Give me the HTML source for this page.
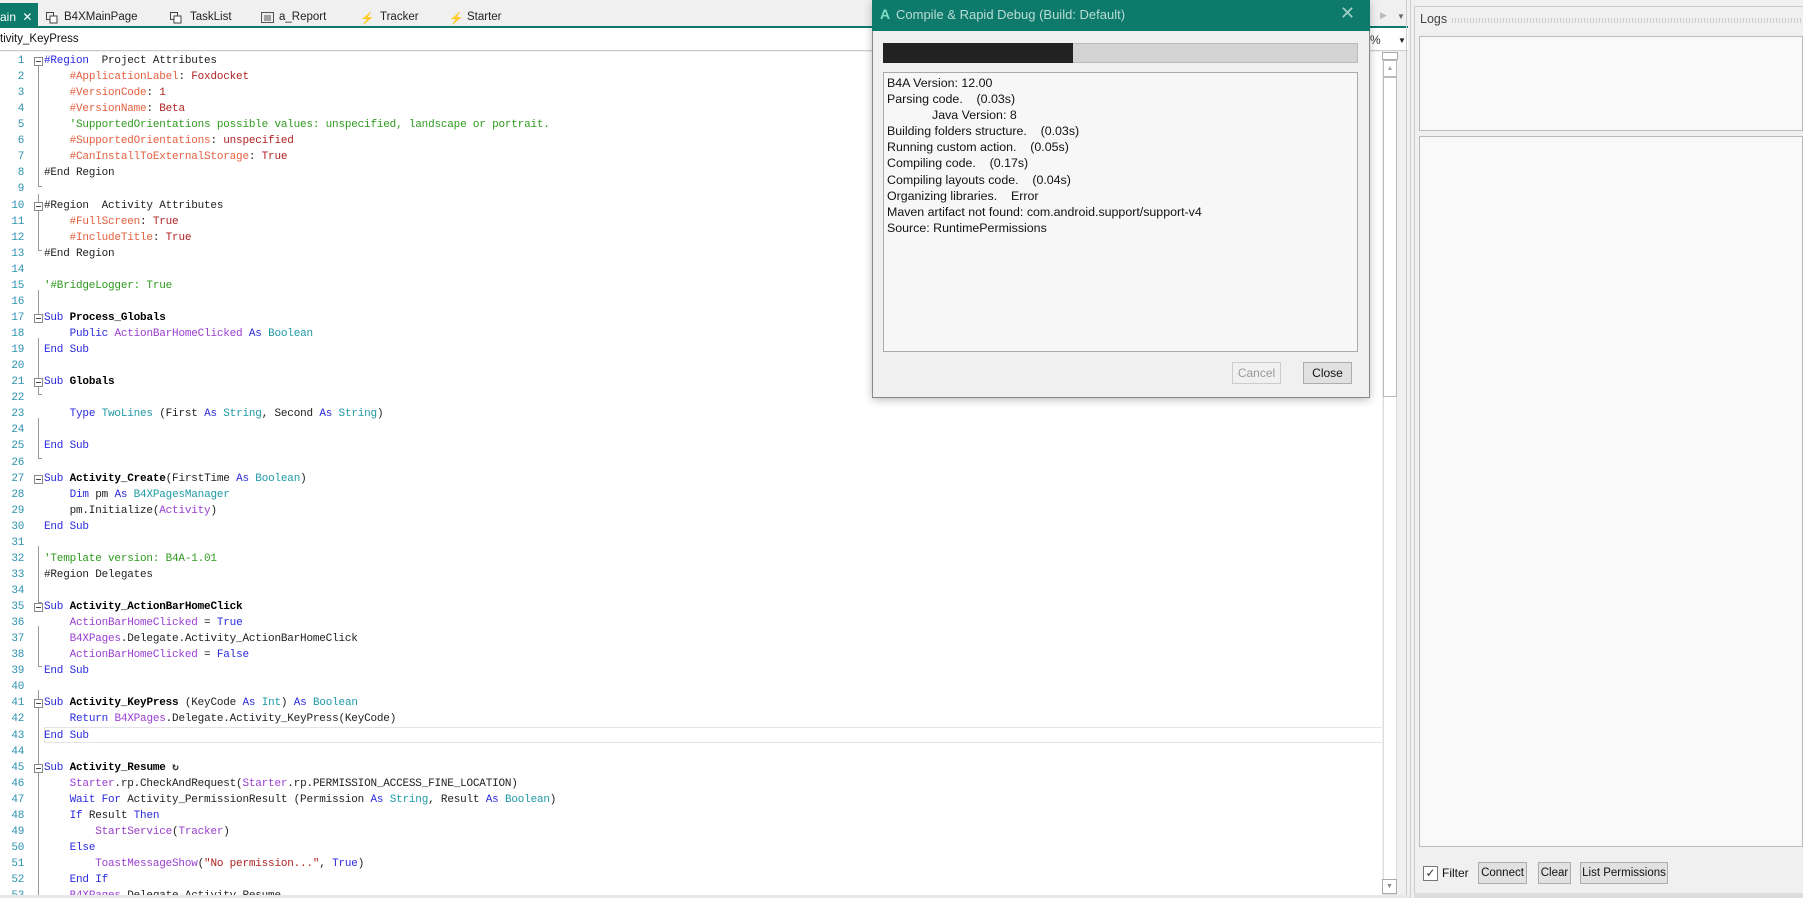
<!DOCTYPE html>
<html><head><meta charset="utf-8"><style>
*{margin:0;padding:0;box-sizing:border-box}
body{width:1803px;height:898px;overflow:hidden;background:#f0f0f0;position:relative;font-family:"Liberation Sans",sans-serif}
.a{position:absolute}
#code{position:absolute;left:0;top:52px;width:1382px;height:843px;background:#fff;overflow:hidden}
.ln{position:absolute;left:0;width:24px;text-align:right;color:#2b91af;font:11px/16px "Liberation Mono",monospace;letter-spacing:-0.3px}
.tx{position:absolute;left:44px;white-space:pre;font:11px/16px "Liberation Mono",monospace;letter-spacing:-0.2px;color:#222}
.k{color:#2a2ae0}.d{color:#e4603f}.v{color:#b02222}.c{color:#2e9a1e}.t{color:#1e9aa6}.p{color:#9a3ed2}.b{font-weight:bold;color:#000}
.fold{position:absolute;left:34px;width:9px;height:9px;border:1px solid #888;background:#fff}
.fold:after{content:"";position:absolute;left:1px;top:3px;width:5px;height:1px;background:#444}
.vl{position:absolute;left:38px;width:1px;background:#999}
.tab{position:absolute;top:11px;font-size:11.5px;color:#222}
.btn{position:absolute;border:1px solid #adadad;background:#e1e1e1;font-size:11.5px;text-align:center;color:#111;white-space:nowrap}
.dl{font-size:12.4px;color:#111;line-height:16.1px}
</style></head><body>
<!-- tab bar -->
<div class="a" style="left:0;top:3px;width:38px;height:23px;background:#0e7a6c;color:#fff;font-size:12px;padding:7px 0 0 0">ain <span style="margin-left:3px">✕</span></div>
<div class="a" style="left:0;top:26px;width:1408px;height:2px;background:#0e7a6c"></div>
<svg class="a" style="left:46px;top:12px" width="12" height="12"><rect x="0.5" y="0.5" width="7" height="7" fill="none" stroke="#444"/><rect x="4" y="4" width="7" height="7" fill="#fff" stroke="#444"/></svg>
<div class="tab" style="left:64px">B4XMainPage</div>
<svg class="a" style="left:170px;top:12px" width="12" height="12"><rect x="0.5" y="0.5" width="7" height="7" fill="none" stroke="#444"/><rect x="4" y="4" width="7" height="7" fill="#fff" stroke="#444"/></svg>
<div class="tab" style="left:190px">TaskList</div>
<svg class="a" style="left:261px;top:12px" width="13" height="12"><rect x="0.5" y="0.5" width="12" height="10" fill="#eee" stroke="#555"/><path d="M3 4h7M3 6h7M3 8h7" stroke="#555"/></svg>
<div class="tab" style="left:279px">a_Report</div>
<div class="tab" style="left:360px;color:#e0902a">⚡</div>
<div class="tab" style="left:380px">Tracker</div>
<div class="tab" style="left:449px;color:#e0902a">⚡</div>
<div class="tab" style="left:467px">Starter</div>
<div class="a" style="left:1380px;top:10px;color:#bbb;font-size:9px">▶</div>
<div class="a" style="left:1397px;top:12px;color:#666;font-size:8px">▼</div>
<!-- second bar -->
<div class="a" style="left:0;top:28px;width:1408px;height:23px;background:#fff;border-bottom:1px solid #ccc"></div>
<div class="a" style="left:0;top:33px;font-size:11.5px;color:#111">tivity_KeyPress</div>
<div class="a" style="left:1370px;top:33px;font-size:12px;color:#333">%</div>
<div class="a" style="left:1398px;top:36px;font-size:8px;color:#222">▼</div>
<!-- code -->
<div id="code">
<div class="a" style="left:44px;top:675px;width:1338px;height:16px;border:1px solid #e4e4e4;border-right:none"></div>
<div class="vl" style="top:14px;height:120px"></div><div class="a" style="left:38px;top:134px;width:4px;height:1px;background:#999"></div>
<div class="vl" style="top:142px;height:56px"></div><div class="a" style="left:38px;top:198px;width:4px;height:1px;background:#999"></div>
<div class="vl" style="top:238px;height:24px"></div><div class="a" style="left:38px;top:262px;width:4px;height:1px;background:#999"></div>
<div class="vl" style="top:286px;height:56px"></div><div class="a" style="left:38px;top:342px;width:4px;height:1px;background:#999"></div>
<div class="vl" style="top:366px;height:40px"></div><div class="a" style="left:38px;top:406px;width:4px;height:1px;background:#999"></div>
<div class="vl" style="top:494px;height:56px"></div><div class="a" style="left:38px;top:550px;width:4px;height:1px;background:#999"></div>
<div class="vl" style="top:574px;height:40px"></div><div class="a" style="left:38px;top:614px;width:4px;height:1px;background:#999"></div>
<div class="vl" style="top:638px;height:210px"></div>
<div id="lines"></div>
</div>
<!-- scrollbar -->
<div class="a" style="left:1383px;top:52px;width:14px;height:843px;background:#fff;border:1px solid #ddd"></div>
<div class="a" style="left:1382px;top:52px;width:16px;height:8px;border:1px solid #aaa;background:#fff"></div>
<div class="a" style="left:1383px;top:60px;width:14px;height:17px;border:1px solid #bbb;background:#fff;font-size:7px;color:#aaa;text-align:center;line-height:15px">▲</div>
<div class="a" style="left:1383px;top:77px;width:14px;height:320px;border:1px solid #bbb;background:#fff"></div>
<div class="a" style="left:1382px;top:879px;width:15px;height:15px;border:1px solid #aaa;background:#fff;font-size:7px;color:#888;text-align:center;line-height:14px">▼</div>
<div class="a" style="left:1406px;top:0;width:1px;height:898px;background:#ccc"></div>
<div class="a" style="left:1410px;top:0;width:1px;height:898px;background:#ccc"></div>
<!-- logs -->
<div class="a" style="left:1414px;top:6px;width:389px;height:892px;background:#f0f0f0;border-left:1px solid #ccc;border-top:1px solid #ccc"></div>
<div class="a" style="left:1420px;top:12px;font-size:12.5px;color:#444">Logs</div>
<div class="a" style="left:1452px;top:18px;width:351px;height:5px;background:repeating-linear-gradient(90deg,#ccc 0 1px,#f0f0f0 1px 3px)"></div>
<div class="a" style="left:1419px;top:36px;width:384px;height:95px;background:#f9f9f9;border:1px solid #bbb"></div>
<div class="a" style="left:1419px;top:136px;width:384px;height:711px;background:#f9f9f9;border:1px solid #bbb"></div>
<div class="a" style="left:1423px;top:866px;width:15px;height:15px;border:1px solid #777;background:#fff;font-size:12px;line-height:13px;text-align:center;color:#333">✓</div>
<div class="a" style="left:1442px;top:866px;font-size:12px;color:#111">Filter</div>
<div class="btn" style="left:1478px;top:862px;width:49px;height:22px;line-height:20px">Connect</div>
<div class="btn" style="left:1538px;top:862px;width:33px;height:22px;line-height:20px">Clear</div>
<div class="btn" style="left:1580px;top:862px;width:88px;height:22px;line-height:20px">List Permissions</div>
<div class="a" style="left:1414px;top:893px;width:389px;height:5px;background:#ddd"></div>
<div class="a" style="left:0;top:895px;width:1410px;height:3px;background:#e8e8e8"></div>
<!-- dialog -->
<div class="a" style="left:872px;top:0;width:498px;height:398px;background:#f0f0f0;border:1px solid #888;box-shadow:0 2px 8px rgba(0,0,0,.25)"></div>
<div class="a" style="left:872px;top:0;width:498px;height:31px;background:#0e7a6c"></div>
<div class="a" style="left:880px;top:6px;color:#7fe0c8;font-size:14px;font-weight:bold">A</div>
<div class="a" style="left:896px;top:7px;color:#b9dcd5;font-size:13px">Compile &amp; Rapid Debug (Build: Default)</div>
<div class="a" style="left:1340px;top:3px;color:#9fcfc5;font-size:18px">✕</div>
<div class="a" style="left:883px;top:43px;width:475px;height:20px;background:#d4d4d4;border:1px solid #bbb"></div>
<div class="a" style="left:883px;top:43px;width:190px;height:20px;background:#222"></div>
<div class="a" style="left:883px;top:72px;width:475px;height:280px;background:#f7f7f7;border:1px solid #aaa"></div>
<div class="a dl" style="left:887px;top:75px">B4A Version: 12.00<br>Parsing code. &nbsp;&nbsp;&nbsp;(0.03s)<br><span style="padding-left:45px">Java Version: 8</span><br>Building folders structure. &nbsp;&nbsp;&nbsp;(0.03s)<br>Running custom action. &nbsp;&nbsp;&nbsp;(0.05s)<br>Compiling code. &nbsp;&nbsp;&nbsp;(0.17s)<br>Compiling layouts code. &nbsp;&nbsp;&nbsp;(0.04s)<br>Organizing libraries. &nbsp;&nbsp;&nbsp;Error<br>Maven artifact not found: com.android.support/support-v4<br>Source: RuntimePermissions</div>
<div class="btn" style="left:1232px;top:362px;width:49px;height:22px;line-height:20px;color:#999;background:#f0f0f0;border-color:#ccc;font-size:12px">Cancel</div>
<div class="btn" style="left:1303px;top:362px;width:49px;height:22px;line-height:20px;font-size:12px">Close</div>
<script>
var L=[
'<span class="k">#Region</span>  Project Attributes',
'    <span class="d">#ApplicationLabel</span>: <span class="v">Foxdocket</span>',
'    <span class="d">#VersionCode</span>: <span class="v">1</span>',
'    <span class="d">#VersionName</span>: <span class="v">Beta</span>',
'    <span class="c">\'SupportedOrientations possible values: unspecified, landscape or portrait.</span>',
'    <span class="d">#SupportedOrientations</span>: <span class="v">unspecified</span>',
'    <span class="d">#CanInstallToExternalStorage</span>: <span class="v">True</span>',
'#End Region','',
'#Region  Activity Attributes',
'    <span class="d">#FullScreen</span>: <span class="v">True</span>',
'    <span class="d">#IncludeTitle</span>: <span class="v">True</span>',
'#End Region','',
'<span class="c">\'#BridgeLogger: True</span>','',
'<span class="k">Sub</span> <span class="b">Process_Globals</span>',
'    <span class="k">Public</span> <span class="p">ActionBarHomeClicked</span> <span class="k">As</span> <span class="t">Boolean</span>',
'<span class="k">End Sub</span>','',
'<span class="k">Sub</span> <span class="b">Globals</span>','',
'    <span class="k">Type</span> <span class="t">TwoLines</span> (First <span class="k">As</span> <span class="t">String</span>, Second <span class="k">As</span> <span class="t">String</span>)','',
'<span class="k">End Sub</span>','',
'<span class="k">Sub</span> <span class="b">Activity_Create</span>(FirstTime <span class="k">As</span> <span class="t">Boolean</span>)',
'    <span class="k">Dim</span> pm <span class="k">As</span> <span class="t">B4XPagesManager</span>',
'    pm.Initialize(<span class="p">Activity</span>)',
'<span class="k">End Sub</span>','',
'<span class="c">\'Template version: B4A-1.01</span>',
'#Region Delegates','',
'<span class="k">Sub</span> <span class="b">Activity_ActionBarHomeClick</span>',
'    <span class="p">ActionBarHomeClicked</span> = <span class="k">True</span>',
'    <span class="p">B4XPages</span>.Delegate.Activity_ActionBarHomeClick',
'    <span class="p">ActionBarHomeClicked</span> = <span class="k">False</span>',
'<span class="k">End Sub</span>','',
'<span class="k">Sub</span> <span class="b">Activity_KeyPress</span> (KeyCode <span class="k">As</span> <span class="t">Int</span>) <span class="k">As</span> <span class="t">Boolean</span>',
'    <span class="k">Return</span> <span class="p">B4XPages</span>.Delegate.Activity_KeyPress(KeyCode)',
'<span class="k">End Sub</span>','',
'<span class="k">Sub</span> <span class="b">Activity_Resume</span> <span style="font-weight:bold;color:#333">↻</span>',
'    <span class="p">Starter</span>.rp.CheckAndRequest(<span class="p">Starter</span>.rp.PERMISSION_ACCESS_FINE_LOCATION)',
'    <span class="k">Wait For</span> Activity_PermissionResult (Permission <span class="k">As</span> <span class="t">String</span>, Result <span class="k">As</span> <span class="t">Boolean</span>)',
'    <span class="k">If</span> Result <span class="k">Then</span>',
'        <span class="p">StartService</span>(<span class="p">Tracker</span>)',
'    <span class="k">Else</span>',
'        <span class="p">ToastMessageShow</span>(<span class="v">"No permission..."</span>, <span class="k">True</span>)',
'    <span class="k">End If</span>',
'    <span class="p">B4XPages</span>.Delegate.Activity_Resume'];
var folds=[1,10,17,21,27,35,41,45];
var h='';
for(var i=0;i<L.length;i++){var y=i*16.06+1;
h+='<div class="ln" style="top:'+y+'px">'+(i+1)+'</div><div class="tx" style="top:'+y+'px">'+L[i]+'</div>';
if(folds.indexOf(i+1)>=0)h+='<div class="fold" style="top:'+(y+4)+'px"></div>';}
document.getElementById('lines').innerHTML=h;
</script>
</body></html>
